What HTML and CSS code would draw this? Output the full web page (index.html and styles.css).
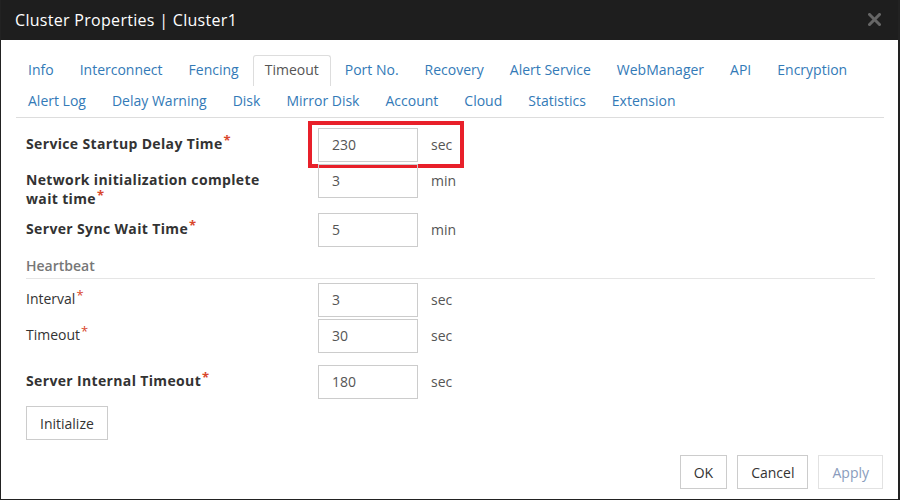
FILE: index.html
```html
<!DOCTYPE html>
<html>
<head>
<meta charset="utf-8">
<link rel="stylesheet" href="styles.css">
</head>
<body>
<div class="dialog">
  <header class="titlebar">
    <span class="title">Cluster Properties | Cluster1</span>
    <svg class="close" width="13" height="13" viewBox="0 0 13 13"><path d="M1.5 1.5 L11.5 11.5 M11.5 1.5 L1.5 11.5" stroke="#666" stroke-width="3" stroke-linecap="square"/></svg>
  </header>
  <div class="content">
    <nav class="tabs">
      <div class="tabrow">
        <span class="tab">Info</span>
        <span class="tab">Interconnect</span>
        <span class="tab">Fencing</span>
        <span class="tab active">Timeout</span>
        <span class="tab">Port No.</span>
        <span class="tab">Recovery</span>
        <span class="tab">Alert Service</span>
        <span class="tab">WebManager</span>
        <span class="tab">API</span>
        <span class="tab">Encryption</span>
      </div>
      <div class="tabrow">
        <span class="tab">Alert Log</span>
        <span class="tab">Delay Warning</span>
        <span class="tab">Disk</span>
        <span class="tab">Mirror Disk</span>
        <span class="tab">Account</span>
        <span class="tab">Cloud</span>
        <span class="tab">Statistics</span>
        <span class="tab">Extension</span>
      </div>
    </nav>
    <div class="form">
      <div class="row first">
        <label class="lbl bold">Service Startup Delay Time<sup>*</sup></label>
        <div class="input">230</div>
        <span class="unit">sec</span>
        <div class="mark"></div>
      </div>
      <div class="row">
        <label class="lbl bold">Network initialization complete<br>wait time<sup>*</sup></label>
        <div class="input">3</div>
        <span class="unit">min</span>
      </div>
      <div class="row third">
        <label class="lbl bold">Server Sync Wait Time<sup>*</sup></label>
        <div class="input">5</div>
        <span class="unit">min</span>
      </div>
      <div class="section">Heartbeat</div>
      <div class="row hb">
        <label class="lbl">Interval<sup>*</sup></label>
        <div class="input">3</div>
        <span class="unit">sec</span>
      </div>
      <div class="row">
        <label class="lbl">Timeout<sup>*</sup></label>
        <div class="input">30</div>
        <span class="unit">sec</span>
      </div>
      <div class="row internal">
        <label class="lbl bold">Server Internal Timeout<sup>*</sup></label>
        <div class="input">180</div>
        <span class="unit">sec</span>
      </div>
      <div class="initrow"><button class="btn">Initialize</button></div>
    </div>
    <footer class="footer">
      <button class="btn">OK</button>
      <button class="btn">Cancel</button>
      <button class="btn disabled">Apply</button>
    </footer>
  </div>
</div>
</body>
</html>
```
FILE: styles.css
```css
html, body {
  margin: 0;
  padding: 0;
  background: #fff;
}
body {
  font-family: "Open Sans", "Noto Sans CJK JP", sans-serif;
  font-size: 14px;
  color: #333;
}
.dialog {
  width: 900px;
  height: 500px;
  box-sizing: border-box;
  border-left: 1px solid #222;
  border-right: 2px solid #222;
  border-bottom: 1px solid #222;
  display: flex;
  flex-direction: column;
  background: #fff;
}
.titlebar {
  height: 40px;
  background: #1e1e1e;
  color: #fff;
  display: flex;
  align-items: center;
  justify-content: space-between;
  padding: 0 17px 0 14px;
  flex: none;
}
.title {
  font-size: 16px;
  letter-spacing: 0.3px;
}
.close {
  display: block;
  margin-top: -1px;
}
.content {
  flex: 1;
  display: flex;
  flex-direction: column;
  padding: 15px 14px 0 15px;
}
.tabs {
  border-bottom: 1px solid #ddd;
}
.tabrow {
  display: flex;
  height: 31px;
}
.tab {
  display: block;
  padding: 0 11px;
  margin-right: 2px;
  line-height: 28px;
  color: #337ab7;
  border: 1px solid transparent;
  border-bottom: none;
  border-radius: 3px 3px 0 0;
  white-space: nowrap;
}
.tab.active {
  color: #555;
  border-color: #ddd;
  background: #fff;
}
.form {
  padding: 10px 0 0 10px;
  display: flex;
  flex-direction: column;
}
.row {
  position: relative;
  display: grid;
  grid-template-columns: 292px 100px auto;
  align-items: start;
  margin-top: 2px;
}
.row.first {
  margin-top: 0;
}
.row.third {
  margin-top: 5px;
}
.row.hb {
  margin-top: 4px;
}
.row.internal {
  margin-top: 12px;
}
.lbl {
  padding-top: 6px;
  line-height: 19px;
  color: #333;
}
.lbl.bold {
  font-weight: 700;
  letter-spacing: 0.35px;
}
.lbl sup {
  color: #d9472b;
  font-size: 13px;
  line-height: 0;
  vertical-align: 4px;
  margin-left: 1px;
}
.input {
  height: 34px;
  box-sizing: border-box;
  border: 1px solid #ccc;
  padding: 0 13px;
  line-height: 32px;
  color: #555;
}
.unit {
  margin-left: 13px;
  line-height: 34px;
  color: #555;
}
.mark {
  position: absolute;
  left: 282px;
  top: -7px;
  width: 156px;
  height: 47px;
  box-sizing: border-box;
  border: 4px solid #e8202a;
  pointer-events: none;
}
.section {
  margin-top: 9px;
  margin-right: 9px;
  padding-bottom: 3px;
  line-height: 19px;
  color: #777;
  font-weight: 600;
  border-bottom: 1px solid #e5e5e5;
}
.initrow {
  display: flex;
  margin-top: 7px;
}
.btn {
  font-family: inherit;
  font-size: 14px;
  height: 34px;
  padding: 0 13px;
  border: 1px solid #ccc;
  background: #fff;
  color: #333;
  border-radius: 0;
}
.footer {
  display: flex;
  justify-content: flex-end;
  gap: 10px;
  margin-top: 15px;
  padding-right: 1px;
}
.btn.disabled {
  border-color: #e2e2e2;
  color: #8a9cbc;
}
```
